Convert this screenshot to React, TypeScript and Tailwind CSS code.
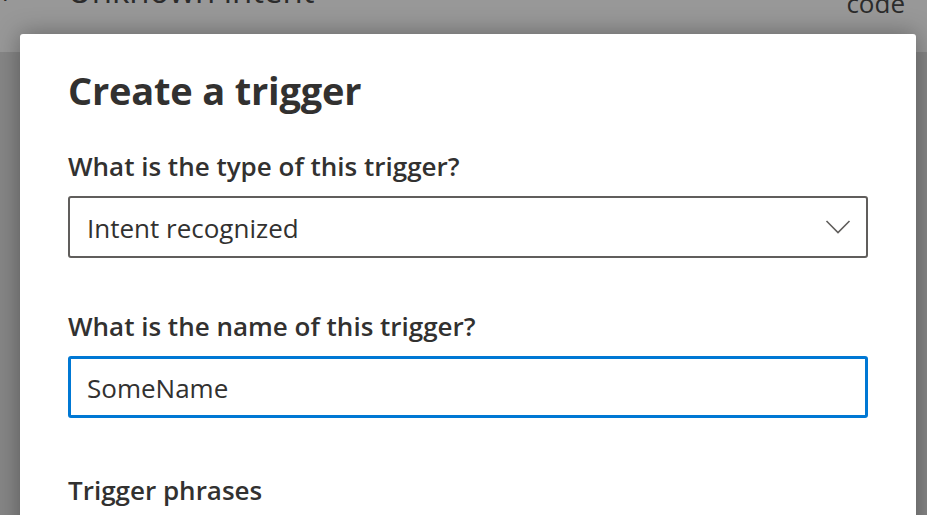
const font = { fontFamily: '"Open Sans", "Noto Sans", sans-serif' };

const Chevron = () => (
  <svg width="26" height="16" viewBox="0 0 26 16" fill="none" className="text-[#605e5c]">
    <path d="M1.5 2 L13 13.5 L24.5 2" stroke="currentColor" strokeWidth="1.6" />
  </svg>
);

const App = () => {
  return (
    <div className="relative w-[927px] h-[515px] overflow-hidden bg-[#868686]" style={font}>
      {/* page behind the overlay */}
      <div className="h-[52px] bg-[#989898] text-[#2b2b2b] flex items-start pl-[2px] pr-[22px]">
        <span className="-mt-[26px] text-[26px] leading-[34px]">r</span>
        <span className="ml-[55px] -mt-[29px] text-[33px] leading-[40px]">Unknown intent</span>
        <span className="ml-auto -mt-[14px] text-[26px] leading-[34px]">code</span>
      </div>

      {/* dialog */}
      <div className="absolute left-[20px] top-[34px] w-[896px] h-[520px] bg-white rounded-[3px] shadow-[0_0_24px_rgba(0,0,0,0.35)] px-[48px] pt-[31px] text-[#323130]">
        <h1 className="text-[38px] leading-[50px] font-bold tracking-[-0.2px]">Create a trigger</h1>

        <div className="mt-[34px] flex flex-col gap-[13px]">
          <label className="text-[26px] leading-[34px] font-semibold">What is the type of this trigger?</label>
          <div className="h-[62px] flex items-center justify-between border-2 border-[#605e5c] rounded-[3px] pl-[17px] pr-[15px]">
            <span className="text-[26px] leading-[34px] pt-[2px]">Intent recognized</span>
            <Chevron />
          </div>
        </div>

        <div className="mt-[51px] flex flex-col gap-[13px]">
          <label className="text-[26px] leading-[34px] font-semibold">What is the name of this trigger?</label>
          <div className="h-[62px] flex items-center border-[3px] border-[#0078d4] rounded-[3px] pl-[16px]">
            <span className="text-[26px] leading-[34px] pt-[2px]">SomeName</span>
          </div>
        </div>

        <div className="mt-[55px]">
          <label className="text-[26px] leading-[34px] font-semibold">Trigger phrases</label>
        </div>
      </div>
    </div>
  );
};

export default App;
